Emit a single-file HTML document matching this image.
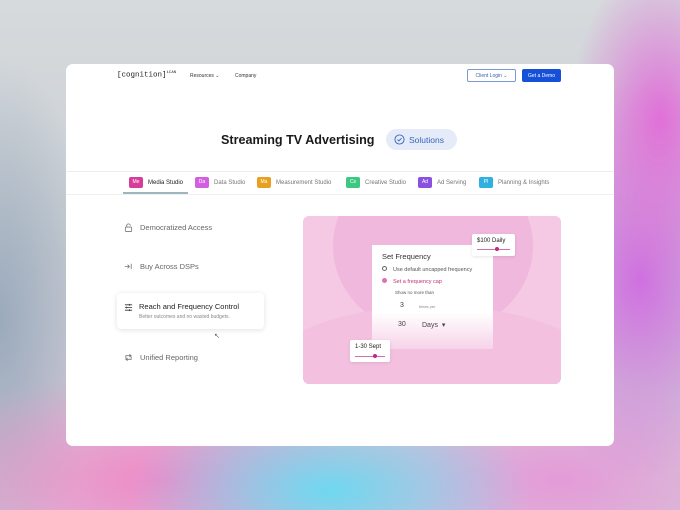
<!DOCTYPE html>
<html><head><meta charset="utf-8"><style>
*{margin:0;padding:0;box-sizing:border-box}
body{width:680px;height:510px;overflow:hidden;font-family:"Liberation Sans",sans-serif;position:relative;
background:
radial-gradient(ellipse 90px 160px at 660px 120px,#e070d8 0%,rgba(224,112,216,0) 100%),
radial-gradient(ellipse 120px 200px at 640px 280px,#d070e0 0%,rgba(208,112,224,0) 100%),
radial-gradient(ellipse 200px 90px at 330px 490px,#6fd8f0 0%,rgba(111,216,240,0) 100%),
radial-gradient(ellipse 260px 110px at 160px 480px,#f08ac8 0%,rgba(240,138,200,0) 100%),
radial-gradient(ellipse 220px 100px at 560px 480px,#e59ad8 0%,rgba(229,154,216,0) 100%),
radial-gradient(ellipse 100px 260px at 0px 320px,#9aaabc 0%,rgba(154,170,188,0) 100%),
linear-gradient(180deg,#d6dadd 0%,#c9ced3 50%,#d7c4d8 100%);}
.card{position:absolute;left:66px;top:64px;width:548px;height:382px;background:#fff;border-radius:7px;overflow:hidden}
.abs{position:absolute}
.nav{font-size:5px;color:#333}
.tab{position:absolute;top:113px;font-size:6px;color:#777;display:flex;align-items:center;gap:5px}
.tab b{display:inline-block;width:14px;height:11px;border-radius:2px;color:#fff;font-size:5px;text-align:center;line-height:11px;font-weight:normal}
.item{position:absolute;left:58px;font-size:7.5px;color:#666;display:flex;align-items:center;gap:7px}
.item svg{width:9px;height:9px}
</style></head><body>
<div class="card">
 <div class="abs" style="left:51px;top:7px;font-size:7.5px;color:#222;font-family:'Liberation Mono',monospace">[cognition]<sup style="font-size:4px">iCAN</sup></div>
 <div class="abs nav" style="left:124px;top:9px">Resources ⌄</div>
 <div class="abs nav" style="left:169px;top:9px">Company</div>
 <div class="abs" style="left:401px;top:5px;width:49px;height:13px;border:1px solid #7a9ad0;border-radius:2px;font-size:5px;color:#3b5fb0;display:flex;align-items:center;justify-content:center">Client Login ⌄</div>
 <div class="abs" style="left:456px;top:5px;width:39px;height:13px;background:#1650d8;border-radius:2px;font-size:5px;color:#fff;display:flex;align-items:center;justify-content:center">Get a Demo</div>
 <div class="abs" style="left:155px;top:69px;font-size:12.6px;font-weight:bold;color:#1a1a1a">Streaming TV Advertising</div>
 <div class="abs" style="left:320px;top:65px;width:71px;height:21px;background:#e5ebf8;border-radius:11px;font-size:8.5px;color:#3766b8;display:flex;align-items:center;gap:4px;padding-left:8px"><svg width="11" height="11" viewBox="0 0 12 12"><circle cx="6" cy="6" r="5" fill="none" stroke="#3766b8" stroke-width="1"/><path d="M3.8 6.1l1.5 1.5 2.9-3" fill="none" stroke="#3766b8" stroke-width="1"/></svg>Solutions</div>
 <div class="abs" style="left:0;top:107px;width:548px;height:1px;background:#eee"></div>
 <div class="abs" style="left:0;top:130px;width:548px;height:1px;background:#f0f0f0"></div>
 <div class="abs" style="left:57px;top:128px;width:65px;height:2px;background:#9fb5c0"></div>
 <div class="tab" style="left:63px;color:#222"><b style="background:#d83c9a">Me</b>Media Studio</div>
 <div class="tab" style="left:129px"><b style="background:#d45ee0">Da</b>Data Studio</div>
 <div class="tab" style="left:191px"><b style="background:#e8a020">Ma</b>Measurement Studio</div>
 <div class="tab" style="left:280px"><b style="background:#3cc880">Cs</b>Creative Studio</div>
 <div class="tab" style="left:352px"><b style="background:#8a50e0">Ad</b>Ad Serving</div>
 <div class="tab" style="left:413px"><b style="background:#30b0e0">Pl</b>Planning &amp; Insights</div>
 <div class="item" style="top:159px"><svg viewBox="0 0 10 10"><rect x="1.5" y="4.5" width="7" height="5" rx="1" fill="none" stroke="#777" stroke-width=".9"/><path d="M3 4.5V3a2 2 0 014 0" fill="none" stroke="#777" stroke-width=".9"/></svg>Democratized Access</div>
 <div class="item" style="top:198px"><svg viewBox="0 0 10 10"><path d="M1 5h5M4 3l2 2-2 2M8 2v6" fill="none" stroke="#777" stroke-width=".9"/></svg>Buy Across DSPs</div>
 <div class="abs" style="left:51px;top:229px;width:147px;height:36px;background:#fff;border-radius:4px;box-shadow:0 1px 6px rgba(0,0,0,.12)">
  <svg class="abs" style="left:7px;top:10px" width="9" height="9" viewBox="0 0 10 10"><path d="M1 2h8M1 5h8M1 8h8M6 1v2M3 4v2M6 7v2" fill="none" stroke="#333" stroke-width=".9"/></svg>
  <div class="abs" style="left:22px;top:9px;font-size:7.5px;color:#222">Reach and Frequency Control</div>
  <div class="abs" style="left:22px;top:21px;font-size:5px;color:#888">Better outcomes and no wasted budgets.</div>
 </div>
 <div class="abs" style="left:148px;top:268px;font-size:7px;color:#666">↖</div>
 <div class="item" style="top:289px"><svg viewBox="0 0 10 10"><path d="M2 6V3h6M6 1.5L8 3 6 4.5M8 4v3H2M4 8.5L2 7l2-1.5" fill="none" stroke="#777" stroke-width=".9"/></svg>Unified Reporting</div>
 <div class="abs" style="left:237px;top:152px;width:258px;height:168px;border-radius:6px;overflow:hidden;background:#f5c8e4">
  <div class="abs" style="left:30px;top:-60px;width:200px;height:180px;border-radius:50%;background:#f0b8dc"></div>
  <div class="abs" style="left:-40px;top:90px;width:340px;height:140px;border-radius:50%;background:#f3c0e0"></div>
  <div class="abs" style="left:69px;top:29px;width:121px;height:104px;background:linear-gradient(180deg,#fff 0%,#fff 65%,rgba(255,255,255,.3) 100%)">
   <div class="abs" style="left:10px;top:7px;font-size:7.5px;color:#333">Set Frequency</div>
   <div class="abs" style="left:10px;top:21px;font-size:5.5px;color:#555"><span style="display:inline-block;width:5px;height:5px;border:0.7px solid #666;border-radius:50%;margin-right:6px"></span>Use default uncapped frequency</div>
   <div class="abs" style="left:10px;top:33px;font-size:5.5px;color:#c0307a"><span style="display:inline-block;width:5px;height:5px;background:#e070b0;border-radius:50%;margin-right:6px"></span>Set a frequency cap</div>
   <div class="abs" style="left:23px;top:45px;font-size:4.5px;color:#555">Show no more than</div>
   <div class="abs" style="left:28px;top:57px;font-size:7px;color:#444">3</div>
   <div class="abs" style="left:47px;top:59px;font-size:4px;color:#888">times per</div>
   <div class="abs" style="left:26px;top:76px;font-size:7px;color:#444">30</div>
   <div class="abs" style="left:50px;top:76px;font-size:7px;color:#444">Days &nbsp;▾</div>
  </div>
  <div class="abs" style="left:169px;top:18px;width:43px;height:22px;background:#fff;border-radius:2px;box-shadow:0 1px 3px rgba(0,0,0,.1)">
   <div class="abs" style="left:5px;top:4px;font-size:6px;color:#222">$100 Daily</div>
   <div class="abs" style="left:5px;top:15px;width:33px;height:1px;background:#d070a8"></div>
   <div class="abs" style="left:23px;top:13px;width:4px;height:4px;border-radius:50%;background:#c02a80"></div>
  </div>
  <div class="abs" style="left:47px;top:124px;width:40px;height:22px;background:#fff;border-radius:2px;box-shadow:0 1px 3px rgba(0,0,0,.1)">
   <div class="abs" style="left:5px;top:4px;font-size:6px;color:#222">1-30 Sept</div>
   <div class="abs" style="left:5px;top:16px;width:30px;height:1px;background:#d070a8"></div>
   <div class="abs" style="left:23px;top:14px;width:4px;height:4px;border-radius:50%;background:#c02a80"></div>
  </div>
 </div>
</div>
</body></html>
